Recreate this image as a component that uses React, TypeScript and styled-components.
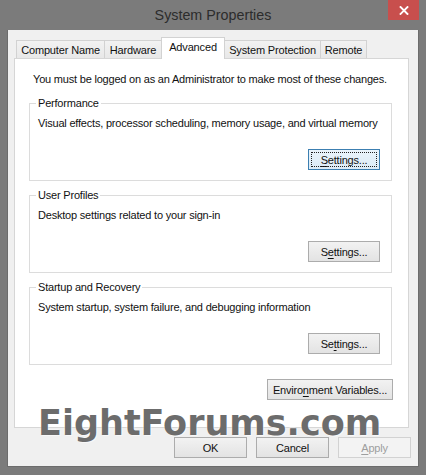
import React from "react";
import styled, { createGlobalStyle, css } from "styled-components";

const GlobalStyle = createGlobalStyle`
  html, body { margin: 0; padding: 0; background: #7b7b7b; }
  body { font-family: "Liberation Sans", Arial, sans-serif; }
  * { box-sizing: border-box; }
`;

const Window = styled.div`
  position: relative;
  width: 426px;
  height: 475px;
  background: #7b7b7b;
  display: flex;
  flex-direction: column;
  overflow: hidden;
`;

const TitleBar = styled.div`
  height: 30px;
  display: grid;
  grid-template-columns: 1fr auto 1fr;
  align-items: start;
`;

const Title = styled.div`
  grid-column: 2;
  font-size: 14.3px;
  line-height: 30px;
  color: #2c2c2c;
`;

const CloseButton = styled.div`
  grid-column: 3;
  justify-self: end;
  margin-right: 7px;
  width: 31px;
  height: 20px;
  background: #c84f4d;
  display: flex;
  align-items: center;
  justify-content: center;
`;

const Client = styled.div`
  flex: 1;
  margin: 0 7px 8px 7px;
  border: 1px solid #6c6c6c;
  border-top: none;
  background: #f0f0f0;
  display: flex;
  flex-direction: column;
  padding: 7px 9px 0 6px;
`;

const TabRow = styled.div`
  height: 21px;
  display: flex;
  align-items: flex-end;
  padding-left: 2px;
`;

const Tab = styled.div<{ $w: number; $active?: boolean }>`
  width: ${(p) => p.$w}px;
  height: 18px;
  margin-left: -1px;
  &:first-child { margin-left: 0; }
  border: 1px solid #d2d2d2;
  border-bottom: none;
  background: linear-gradient(#f2f2f2, #e8e8e8);
  font-size: 11px;
  letter-spacing: -0.15px;
  color: #111;
  display: flex;
  align-items: center;
  justify-content: center;
  ${(p) =>
    p.$active &&
    css`
      position: relative;
      z-index: 1;
      height: 22px;
      margin-bottom: -1px;
      padding-bottom: 4px;
      background: #fff;
      border-color: #d2d2d2;
    `}
`;

const Panel = styled.div`
  height: 370px;
  background: #fff;
  border: 1px solid #d6d6d6;
  display: flex;
  flex-direction: column;
  padding: 12px 16px 0 14px;
`;

const Notice = styled.div`
  margin-left: 4px;
  font-size: 11px;
  line-height: 16px;
  letter-spacing: -0.2px;
  color: #111;
`;

const GroupBox = styled.fieldset`
  margin: 8px 0 0 0;
  padding: 0 11px 10px 8px;
  border: 1px solid #dcdcdc;
  min-width: 0;
  & + & {
    margin-top: 6px;
  }
`;

const Legend = styled.legend`
  margin-left: -2px;
  padding: 0 2px;
  font-size: 11px;
  line-height: 16px;
  letter-spacing: -0.2px;
  color: #111;
`;

const GroupBody = styled.div`
  display: flex;
  flex-direction: column;
`;

const Description = styled.div`
  margin-top: 4px;
  font-size: 11px;
  line-height: 16px;
  letter-spacing: -0.2px;
  color: #111;
`;

const Button = styled.button<{ $w: number; $focused?: boolean }>`
  width: ${(p) => p.$w}px;
  height: 21px;
  padding: 0;
  border: 1px solid #acacac;
  background: linear-gradient(#f2f2f2, #e3e3e3);
  font-family: "Liberation Sans", Arial, sans-serif;
  font-size: 11px;
  letter-spacing: -0.2px;
  color: #111;
  display: flex;
  align-items: center;
  justify-content: center;
  ${(p) =>
    p.$focused &&
    css`
      border-color: #3c7fb1;
      background: linear-gradient(#eaf4fb, #dcebf6);
      outline: 1px dotted #222;
      outline-offset: -4px;
    `}
  &:disabled {
    border-color: #d2d2d2;
    background: #f3f3f3;
    color: #9e9e9e;
  }
`;

const GroupButton = styled(Button)`
  margin-top: 18px;
  align-self: flex-end;
`;

const EnvButton = styled(Button)`
  margin-top: 14px;
  margin-right: -1px;
  align-self: flex-end;
`;

const Key = styled.span`
  text-decoration: underline;
  text-underline-offset: 2px;
`;

const Footer = styled.div`
  display: flex;
  justify-content: flex-end;
  gap: 9px;
  padding-top: 9px;
  margin-right: -2px;
`;

const Watermark = styled.div`
  position: absolute;
  left: 38px;
  top: 406px;
  font-family: "DejaVu Sans", Verdana, sans-serif;
  font-weight: bold;
  font-size: 35px;
  line-height: 1;
  color: #6c6c6c;
  text-shadow: 1px 1px 1px rgba(255, 255, 255, 0.6), -1px -1px 1px rgba(255, 255, 255, 0.4);
  pointer-events: none;
  white-space: nowrap;
`;

const groups = [
  {
    title: "Performance",
    text: "Visual effects, processor scheduling, memory usage, and virtual memory",
    label: (
      <>
        <Key>S</Key>ettings...
      </>
    ),
    focused: true,
  },
  {
    title: "User Profiles",
    text: "Desktop settings related to your sign-in",
    label: (
      <>
        S<Key>e</Key>ttings...
      </>
    ),
  },
  {
    title: "Startup and Recovery",
    text: "System startup, system failure, and debugging information",
    label: (
      <>
        Se<Key>t</Key>tings...
      </>
    ),
  },
];

const tabs = [
  { name: "Computer Name", w: 89 },
  { name: "Hardware", w: 58 },
  { name: "Advanced", w: 64, active: true },
  { name: "System Protection", w: 97 },
  { name: "Remote", w: 47 },
];

export default function App() {
  return (
    <>
      <GlobalStyle />
      <Window>
        <TitleBar>
          <Title>System Properties</Title>
          <CloseButton>
            <svg width="10" height="9" viewBox="0 0 10 9">
              <path d="M1.5 1 L8.5 8 M8.5 1 L1.5 8" stroke="#fff" strokeWidth="1.8" strokeLinecap="square" />
            </svg>
          </CloseButton>
        </TitleBar>
        <Client>
          <TabRow>
            {tabs.map((t) => (
              <Tab key={t.name} $w={t.w} $active={t.active}>
                {t.name}
              </Tab>
            ))}
          </TabRow>
          <Panel>
            <Notice>You must be logged on as an Administrator to make most of these changes.</Notice>
            {groups.map((g) => (
              <GroupBox key={g.title}>
                <Legend>{g.title}</Legend>
                <GroupBody>
                  <Description>{g.text}</Description>
                  <GroupButton $w={72} $focused={g.focused}>
                    {g.label}
                  </GroupButton>
                </GroupBody>
              </GroupBox>
            ))}
            <EnvButton $w={126}>
              Enviro<Key>n</Key>ment Variables...
            </EnvButton>
          </Panel>
          <Footer>
            <Button $w={73}>OK</Button>
            <Button $w={73}>Cancel</Button>
            <Button $w={73} disabled>
              <Key>A</Key>pply
            </Button>
          </Footer>
        </Client>
        <Watermark>EightForums.com</Watermark>
      </Window>
    </>
  );
}
